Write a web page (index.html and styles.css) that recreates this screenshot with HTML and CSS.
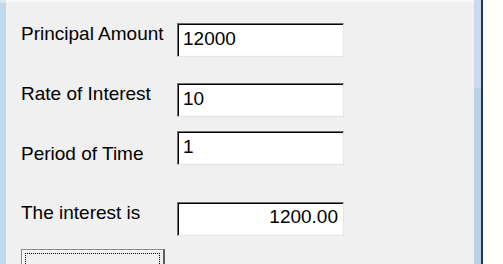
FILE: index.html
```html
<!DOCTYPE html>
<html>
<head>
<meta charset="utf-8">
<link rel="stylesheet" href="styles.css">
</head>
<body>
<div class="window">
  <div class="frame-left"></div>
  <div class="panel">
    <div class="row row-1">
      <label class="label">Principal Amount</label>
      <input class="field" type="text" value="12000">
    </div>
    <div class="row row-2">
      <label class="label">Rate of Interest</label>
      <input class="field" type="text" value="10">
    </div>
    <div class="row row-3">
      <label class="label label-low">Period of Time</label>
      <input class="field" type="text" value="1">
    </div>
    <div class="row row-4">
      <label class="label">The interest is</label>
      <input class="field field-right" type="text" value="1200.00" readonly>
    </div>
    <div class="button-row">
      <button class="button"><span class="focus"></span></button>
    </div>
  </div>
  <div class="frame-right"></div>
  <div class="frame-edge"></div>
  <div class="desktop"></div>
</div>
</body>
</html>
```
FILE: styles.css
```css
html, body {
  margin: 0;
  padding: 0;
  width: 503px;
  height: 264px;
  overflow: hidden;
  background: #fefefb;
}

.window {
  display: flex;
  width: 503px;
  height: 264px;
  overflow: hidden;
  font-family: "Liberation Sans", Arial, sans-serif;
}

.frame-left {
  width: 6px;
  flex: 0 0 6px;
  background: linear-gradient(to bottom, #dbe7f3 0, #dbe7f3 3px, #c3d7ea 3px);
}

.panel {
  flex: 0 0 468px;
  background: #f0f0f0;
  border-top: 2px solid #f8f8f8;
  box-sizing: border-box;
  padding: 21px 0 0 15px;
  display: flex;
  flex-direction: column;
  overflow: hidden;
}

.frame-right {
  flex: 0 0 7px;
  background: linear-gradient(to bottom, #c9dbed 0, #c9dbed 88px, #bdd2e7 88px);
}

.frame-edge {
  flex: 0 0 2px;
  background: #1d3b52;
}

.desktop {
  flex: 1 1 auto;
  background: #fffffb;
}

.row {
  display: flex;
  align-items: flex-start;
  height: 34px;
  flex: 0 0 34px;
}

.row-2 { margin-top: 26px; }
.row-3 { margin-top: 14px; }
.row-4 { margin-top: 37px; }

.label {
  width: 156px;
  flex: 0 0 156px;
  font-size: 19px;
  line-height: 22px;
  color: #000;
  margin-top: 0;
}

.label-low {
  margin-top: 12px;
}

.field {
  box-sizing: border-box;
  width: 167px;
  height: 34px;
  margin: 0;
  padding: 3px 4px 6px 5px;
  font-family: "Liberation Sans", Arial, sans-serif;
  font-size: 19px;
  line-height: 22px;
  color: #000;
  background: #fff;
  border-style: solid;
  border-width: 1px;
  border-color: #6e6e6e #e6e6e6 #e6e6e6 #6e6e6e;
  box-shadow: inset 1px 1px 0 #000, inset -1px -1px 0 #fbfbfb;
  border-radius: 0;
  outline: none;
}

.field-right {
  text-align: right;
  padding-top: 2px;
  padding-bottom: 7px;
  padding-right: 5px;
}

.button-row {
  margin-top: 13px;
  flex: 0 0 auto;
  display: flex;
}

.button {
  box-sizing: border-box;
  width: 144px;
  height: 40px;
  margin: 0;
  padding: 3px;
  background: #f0f0f0;
  border-style: solid;
  border-width: 1px 2px 2px 1px;
  border-color: #8a8a8a #5e5e5e #5e5e5e #8a8a8a;
  box-shadow: inset 1px 1px 0 #ffffff;
  border-radius: 0;
  display: flex;
}

.focus {
  flex: 1 1 auto;
  border: 1px dotted #000;
}
```
